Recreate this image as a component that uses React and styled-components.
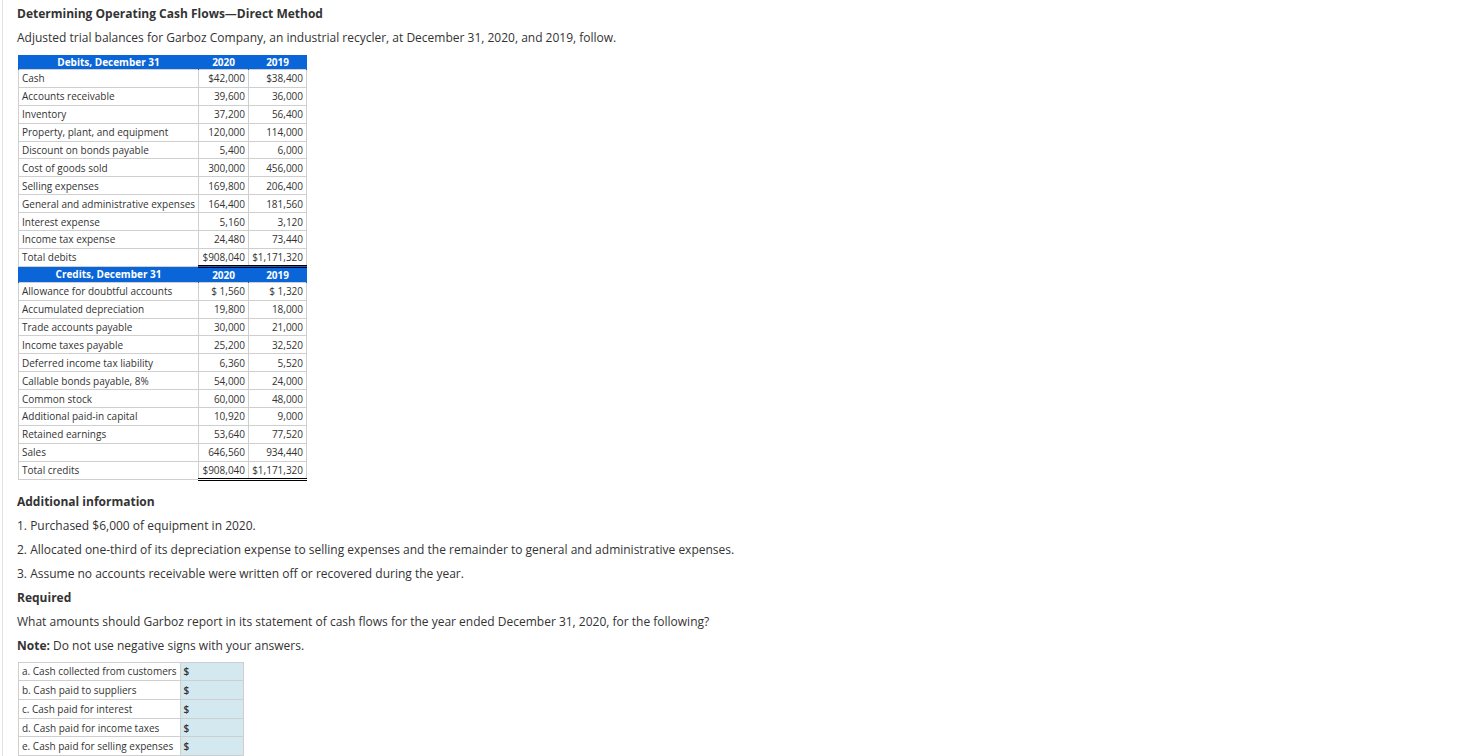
import React from "react";
import styled, { createGlobalStyle } from "styled-components";

const GlobalStyle = createGlobalStyle`
  body {
    margin: 0;
    background: #fff;
    font-family: "Open Sans", "Liberation Sans", sans-serif;
    color: #333;
  }
`;

const debits = [
  ["Cash", "$42,000", "$38,400"],
  ["Accounts receivable", "39,600", "36,000"],
  ["Inventory", "37,200", "56,400"],
  ["Property, plant, and equipment", "120,000", "114,000"],
  ["Discount on bonds payable", "5,400", "6,000"],
  ["Cost of goods sold", "300,000", "456,000"],
  ["Selling expenses", "169,800", "206,400"],
  ["General and administrative expenses", "164,400", "181,560"],
  ["Interest expense", "5,160", "3,120"],
  ["Income tax expense", "24,480", "73,440"],
];

const credits = [
  ["Allowance for doubtful accounts", "$ 1,560", "$ 1,320"],
  ["Accumulated depreciation", "19,800", "18,000"],
  ["Trade accounts payable", "30,000", "21,000"],
  ["Income taxes payable", "25,200", "32,520"],
  ["Deferred income tax liability", "6,360", "5,520"],
  ["Callable bonds payable, 8%", "54,000", "24,000"],
  ["Common stock", "60,000", "48,000"],
  ["Additional paid-in capital", "10,920", "9,000"],
  ["Retained earnings", "53,640", "77,520"],
  ["Sales", "646,560", "934,440"],
];

const answers = [
  "a. Cash collected from customers",
  "b. Cash paid to suppliers",
  "c. Cash paid for interest",
  "d. Cash paid for income taxes",
  "e. Cash paid for selling expenses",
];

const Page = styled.div`
  margin-left: 2px;
  border-left: 1px solid #e2e2e2;
  padding: 5px 0 0 14px;
  min-height: 756px;
  box-sizing: border-box;
`;

const Title = styled.h1`
  margin: 0;
  font-size: 12px;
  font-weight: 700;
  line-height: 18px;
`;

const Para = styled.p`
  margin: ${(p) => (p.$top ? p.$top : "6px")} 0 0;
  font-size: 12px;
  line-height: 18px;
  font-weight: ${(p) => (p.$bold ? 700 : 400)};
  white-space: nowrap;
`;

const Table = styled.table`
  border-collapse: collapse;
  margin-top: 8px;
  margin-left: 1px;
  font-size: 10px;
  line-height: 12px;
`;

const Head = styled.th`
  background: #0a66d8;
  color: #fff;
  font-weight: 700;
  text-align: center;
  height: 14px;
  padding: 0 4px;
  border-left: 1px solid #0a66d8;
  border-right: 1px solid #0a66d8;
`;

const Label = styled.td`
  border: 1px solid #cfcfcf;
  height: 16.9px;
  padding: 0 3px;
  white-space: nowrap;
`;

const Num = styled.td`
  border: 1px solid #cfcfcf;
  border-top: ${(p) => (p.$total ? "1px solid #000" : "1px solid #cfcfcf")};
  border-bottom: ${(p) => (p.$total ? "3px double #000" : "1px solid #cfcfcf")};
  height: 16.9px;
  padding: 0 3px;
  text-align: right;
  white-space: nowrap;
  width: ${(p) => p.$w};
  box-sizing: border-box;
`;

const AnswerTable = styled.table`
  border-collapse: collapse;
  margin-top: 7px;
  margin-left: 1px;
  font-size: 10px;
  line-height: 12px;
`;

const AnsLabel = styled.td`
  border: 1px solid #cfcfcf;
  height: 17.7px;
  padding: 0 3px;
  white-space: nowrap;
`;

const AnsInput = styled.td`
  border: 1px solid #cfcfcf;
  background: #d4e8ef;
  width: 56px;
  padding: 0 3px;
  font-weight: 600;
  color: #333;
`;

function Section({ title, rows, total, totalLabel }) {
  return (
    <>
      <tr>
        <Head>{title}</Head>
        <Head>2020</Head>
        <Head>2019</Head>
      </tr>
      {rows.map((r) => (
        <tr key={r[0]}>
          <Label>{r[0]}</Label>
          <Num $w="50px">{r[1]}</Num>
          <Num $w="58px">{r[2]}</Num>
        </tr>
      ))}
      <tr>
        <Label>{totalLabel}</Label>
        <Num $total $w="50px">{total[0]}</Num>
        <Num $total $w="58px">{total[1]}</Num>
      </tr>
    </>
  );
}

export default function App() {
  return (
    <Page>
      <GlobalStyle />
      <Title>Determining Operating Cash Flows—Direct Method</Title>
      <Para>
        Adjusted trial balances for Garboz Company, an industrial recycler, at
        December 31, 2020, and 2019, follow.
      </Para>
      <Table>
        <tbody>
          <Section
            title="Debits, December 31"
            rows={debits}
            totalLabel="Total debits"
            total={["$908,040", "$1,171,320"]}
          />
          <Section
            title="Credits, December 31"
            rows={credits}
            totalLabel="Total credits"
            total={["$908,040", "$1,171,320"]}
          />
        </tbody>
      </Table>
      <Para $bold $top="12px">Additional information</Para>
      <Para>1. Purchased $6,000 of equipment in 2020.</Para>
      <Para>
        2. Allocated one-third of its depreciation expense to selling expenses
        and the remainder to general and administrative expenses.
      </Para>
      <Para>
        3. Assume no accounts receivable were written off or recovered during
        the year.
      </Para>
      <Para $bold>Required</Para>
      <Para>
        What amounts should Garboz report in its statement of cash flows for the
        year ended December 31, 2020, for the following?
      </Para>
      <Para>
        <b>Note:</b> Do not use negative signs with your answers.
      </Para>
      <AnswerTable>
        <tbody>
          {answers.map((a) => (
            <tr key={a}>
              <AnsLabel>{a}</AnsLabel>
              <AnsInput>$</AnsInput>
            </tr>
          ))}
        </tbody>
      </AnswerTable>
    </Page>
  );
}
